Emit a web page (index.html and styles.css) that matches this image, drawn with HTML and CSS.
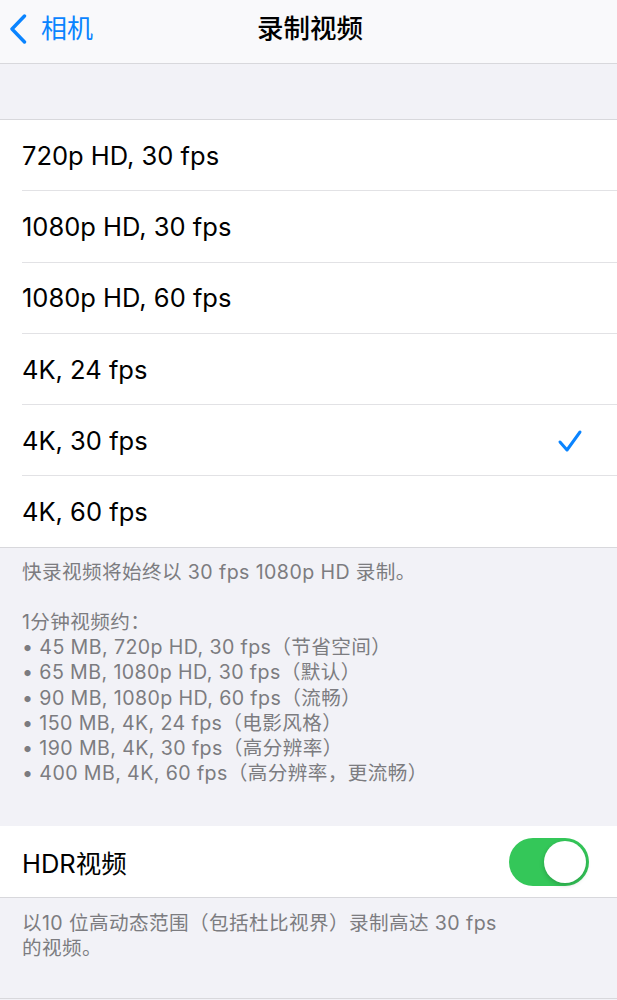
FILE: index.html
```html
<!DOCTYPE html>
<html lang="zh-CN">
<head>
    <meta charset="UTF-8">
    <meta name="viewport" content="width=device-width, initial-scale=1.0">
    <title>录制视频</title>
    <link rel="stylesheet" href="styles.css">
</head>
<body>
    <div class="navbar">
        <div class="back">
            <svg class="chevron" width="18" height="30" viewBox="0 0 18 30">
                <path d="M15.5 2 L3 15 L15.5 28" fill="none" stroke="#0a84ff" stroke-width="3.4" stroke-linecap="round" stroke-linejoin="round"/>
            </svg>
            <span>相机</span>
        </div>
        <div class="title">录制视频</div>
    </div>

    <div class="spacer"></div>

    <div class="group">
        <div class="row"><span>720p HD, 30 fps</span></div>
        <div class="row"><span>1080p HD, 30 fps</span></div>
        <div class="row"><span>1080p HD, 60 fps</span></div>
        <div class="row"><span>4K, 24 fps</span></div>
        <div class="row">
            <span>4K, 30 fps</span>
            <svg class="check" width="26" height="24" viewBox="0 0 26 24">
                <path d="M3 13 L10 21 L23 3" fill="none" stroke="#0a84ff" stroke-width="3" stroke-linecap="round" stroke-linejoin="round"/>
            </svg>
        </div>
        <div class="row"><span>4K, 60 fps</span></div>
    </div>

    <div class="footer">
        <p>快录视频将始终以 30 fps 1080p HD 录制。</p>
        <p>1分钟视频约：<br>
        • 45 MB, 720p HD, 30 fps（节省空间）<br>
        • 65 MB, 1080p HD, 30 fps（默认）<br>
        • 90 MB, 1080p HD, 60 fps（流畅）<br>
        • 150 MB, 4K, 24 fps（电影风格）<br>
        • 190 MB, 4K, 30 fps（高分辨率）<br>
        • 400 MB, 4K, 60 fps（高分辨率，更流畅）</p>
    </div>

    <div class="group">
        <div class="row">
            <span>HDR视频</span>
            <div class="toggle"><div class="knob"></div></div>
        </div>
    </div>

    <div class="footer hdr-note">
        <p>以10 位高动态范围（包括杜比视界）录制高达 30 fps<br>的视频。</p>
    </div>
</body>
</html>
```

FILE: styles.css
```css
body {
    margin: 0;
    background-color: #f2f2f7;
    font-family: Inter, "Noto Sans CJK SC", sans-serif;
    color: #000;
    width: 617px;
    overflow: hidden;
}

.navbar {
    height: 63px;
    background-color: #f9f9fb;
    border-bottom: 1px solid #d8d8dc;
    display: flex;
    justify-content: center;
    position: relative;
}

.back {
    position: absolute;
    left: 9px;
    top: 14px;
    display: flex;
    align-items: center;
    color: #0a84ff;
    font-size: 26px;
    line-height: 30px;
}

.back span {
    margin-left: 14px;
    margin-top: -1px;
}

.title {
    font-size: 26.5px;
    font-weight: 500;
    line-height: 30px;
    margin-top: 13px;
    margin-left: 3px;
}

.spacer {
    height: 55px;
    border-bottom: 1px solid #d8d8dc;
}

.group {
    background: #fff;
    border-bottom: 1px solid #d8d8dc;
}

.row {
    height: 70.3px;
    margin-left: 22px;
    padding-right: 28px;
    display: flex;
    align-items: center;
    justify-content: space-between;
    font-size: 25.5px;
    border-bottom: 1px solid #e2e2e5;
}

.row:last-child {
    border-bottom: none;
}

.check {
    margin-top: 2px;
    margin-right: 6px;
}

.footer {
    padding: 12px 22px 40px;
    font-size: 19.6px;
    line-height: 25.2px;
    letter-spacing: 0.4px;
    color: #7c7c80;
}

.footer p {
    margin: 0 0 25px;
}

.footer p:last-child {
    margin-bottom: 0;
}

.hdr-note {
    padding-top: 13px;
    padding-bottom: 0;
    box-sizing: border-box;
    height: 101px;
    border-bottom: 1px solid #d8d8dc;
}

.toggle {
    width: 80px;
    height: 48px;
    border-radius: 24px;
    background: #34c759;
    position: relative;
}

.knob {
    position: absolute;
    right: 3px;
    top: 3px;
    width: 42px;
    height: 42px;
    border-radius: 50%;
    background: #fff;
    box-shadow: 0 2px 5px rgba(0, 0, 0, 0.2);
}
```
